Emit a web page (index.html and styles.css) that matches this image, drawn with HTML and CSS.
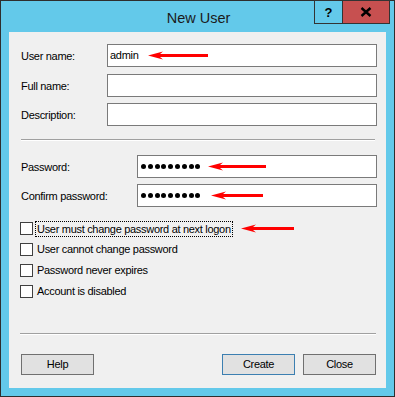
FILE: index.html
```html
<!DOCTYPE html>
<html>
<head>
<meta charset="utf-8">
<link rel="stylesheet" href="styles.css">
</head>
<body>
<div class="window">
  <div class="titlebar">
    <div class="title">New User</div>
    <div class="controls">
      <div class="ctl help-ctl">?</div>
      <div class="ctl close-ctl">
        <svg width="12" height="10" viewBox="0 0 12 10"><path d="M1.5 1 L10.5 9 M10.5 1 L1.5 9" stroke="#000" stroke-width="2.4"/></svg>
      </div>
    </div>
  </div>
  <div class="content">
    <div class="field">
      <span class="label">User name:</span>
      <div class="input">admin</div>
    </div>
    <div class="field gap7">
      <span class="label">Full name:</span>
      <div class="input"></div>
    </div>
    <div class="field gap6">
      <span class="label">Description:</span>
      <div class="input"></div>
    </div>
    <div class="sep sep1"></div>
    <div class="field pw first-pw">
      <span class="label">Password:</span>
      <div class="input dots"><i></i><i></i><i></i><i></i><i></i><i></i><i></i><i></i><i></i></div>
    </div>
    <div class="field pw gap6">
      <span class="label">Confirm password:</span>
      <div class="input dots"><i></i><i></i><i></i><i></i><i></i><i></i><i></i><i></i><i></i></div>
    </div>
    <div class="checks">
      <div class="check"><span class="box"></span><span class="ctext focus">User must change password at next logon</span></div>
      <div class="check"><span class="box"></span><span class="ctext">User cannot change password</span></div>
      <div class="check"><span class="box"></span><span class="ctext">Password never expires</span></div>
      <div class="check"><span class="box"></span><span class="ctext">Account is disabled</span></div>
    </div>
    <div class="sep sep2"></div>
    <div class="buttons">
      <div class="btn">Help</div>
      <div class="spacer"></div>
      <div class="btn default">Create</div>
      <div class="btn">Close</div>
    </div>
  </div>
</div>
<svg class="arrow a1" width="60" height="9" viewBox="0 0 60 9"><polygon points="0,4.5 15,0.5 12,3 60,3 60,6 12,6 15,8.5" fill="#ff0000"/></svg>
<svg class="arrow a2" width="58" height="9" viewBox="0 0 58 9"><polygon points="0,4.5 15,0.5 12,3 58,3 58,6 12,6 15,8.5" fill="#ff0000"/></svg>
<svg class="arrow a3" width="52" height="9" viewBox="0 0 52 9"><polygon points="0,4.5 15,0.5 12,3 52,3 52,6 12,6 15,8.5" fill="#ff0000"/></svg>
<svg class="arrow a4" width="53" height="9" viewBox="0 0 53 9"><polygon points="0,4.5 15,0.5 12,3 53,3 53,6 12,6 15,8.5" fill="#ff0000"/></svg>
</body>
</html>
```

FILE: styles.css
```css
html, body {
  margin: 0;
  padding: 0;
}
body {
  width: 395px;
  height: 397px;
  overflow: hidden;
  position: relative;
  font-family: "Liberation Sans", Arial, sans-serif;
  font-size: 11px;
  letter-spacing: -0.3px;
  color: #000;
}
.window {
  width: 395px;
  height: 397px;
  box-sizing: border-box;
  border: 1px solid #2e2e2e;
  background: #63c9ea;
  padding: 0 8px 8px 8px;
  display: flex;
  flex-direction: column;
}
.titlebar {
  position: relative;
  height: 31px;
  margin: 0 -8px;
  flex: none;
}
.title {
  text-align: center;
  font-size: 14.5px;
  letter-spacing: 0;
  line-height: 34px;
  color: #1b1b1b;
  padding-left: 2px;
}
.controls {
  position: absolute;
  top: -1px;
  right: 4px;
  display: flex;
  border: 1px solid #333;
  height: 22px;
}
.ctl {
  display: flex;
  align-items: center;
  justify-content: center;
  height: 22px;
}
.help-ctl {
  width: 27px;
  border-right: 1px solid #333;
  font-weight: bold;
  font-size: 13px;
  letter-spacing: 0;
}
.close-ctl {
  width: 46px;
  background: #c75050;
}
.content {
  flex: 1;
  background: #f0f0f0;
  padding: 12px 9px 0 12px;
  display: flex;
  flex-direction: column;
}
.field {
  display: flex;
  align-items: center;
  height: 23px;
}
.gap7 { margin-top: 7px; }
.gap6 { margin-top: 6px; }
.label {
  width: 86px;
  flex: none;
}
.pw .label { width: 116px; }
.first-pw { margin-top: 14px; }
.input {
  flex: 1;
  height: 23px;
  box-sizing: border-box;
  border: 1px solid #7a7a7a;
  background: #fff;
  padding: 0 2px;
  line-height: 20px;
  font-size: 11px;
}
.dots {
  display: flex;
  align-items: center;
  gap: 1.8px;
  padding-left: 3px;
}
.dots i {
  width: 5px;
  height: 5px;
  border-radius: 50%;
  background: #000;
}
.sep {
  height: 1px;
  background: #a0a0a0;
  border-bottom: 1px solid #fff;
}
.sep1 {
  margin: 13px 2px 0 0;
}
.sep2 {
  margin: 35px 1px 0 -1px;
}
.checks {
  margin-top: 15px;
  margin-left: -1px;
  display: flex;
  flex-direction: column;
  gap: 8px;
}
.check {
  display: flex;
  align-items: center;
  height: 13px;
}
.box {
  width: 13px;
  height: 13px;
  box-sizing: border-box;
  border: 1px solid #404040;
  background: #fff;
  flex: none;
}
.ctext {
  margin-left: 3px;
  padding: 0 1px;
  line-height: 13px;
}
.focus {
  outline: 1px dotted #000;
  outline-offset: 0;
  line-height: 14px;
}
.buttons {
  display: flex;
  margin-top: 19px;
  gap: 8px;
  padding-right: 1px;
}
.spacer { flex: 1; }
.btn {
  width: 73px;
  height: 21px;
  box-sizing: border-box;
  border: 1px solid #707070;
  background: #e1e1e1;
  text-align: center;
  line-height: 19px;
  flex: none;
}
.btn.default {
  border-color: #3c7fb1;
}
.arrow {
  position: absolute;
  display: block;
}
.a1 { left: 148px; top: 51px; }
.a2 { left: 208px; top: 162px; }
.a3 { left: 211px; top: 191px; }
.a4 { left: 241px; top: 224px; }
```
